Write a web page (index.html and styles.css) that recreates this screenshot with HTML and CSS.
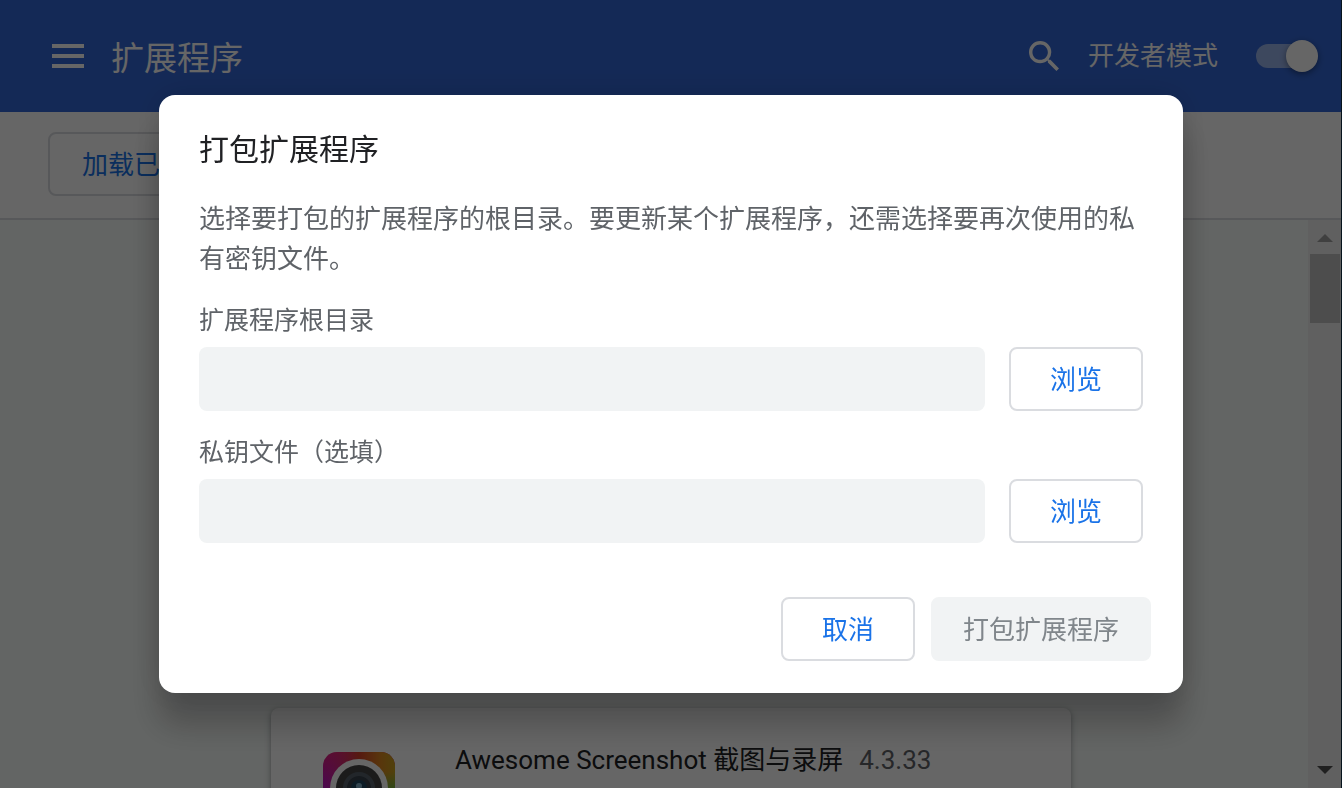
FILE: index.html
```html
<!DOCTYPE html>
<html lang="zh-CN">
<head>
<meta charset="utf-8">
<title>扩展程序</title>
<link rel="stylesheet" href="styles.css">
</head>
<body>
<div class="page">
  <header class="topbar">
    <button class="icon-button" type="button" aria-label="主菜单">
      <svg width="32" height="24" viewBox="0 0 32 24"><path fill="currentColor" d="M0 0h32v4H0zM0 10h32v4H0zM0 20h32v4H0z"/></svg>
    </button>
    <h1 class="topbar-title">扩展程序</h1>
    <button class="icon-button" type="button" aria-label="搜索">
      <svg width="30" height="30" viewBox="3 3 17.5 17.5"><path fill="currentColor" d="M15.5 14h-.79l-.28-.27A6.47 6.47 0 0 0 16 9.500 6.500 6.500 0 1 0 9.500 16c1.610 0 3.090-.59 4.230-1.570l.27.28v.79l5 4.990L20.490 19l-4.990-5zm-6 0C7.010 14 5 11.990 5 9.500S7.010 5 9.500 5 14 7.010 14 9.500 11.990 14 9.500 14z"/></svg>
    </button>
    <label class="dev-mode">开发者模式<input class="toggle" type="checkbox" role="switch" checked></label>
  </header>
  <div class="toolbar">
    <button class="button button-load" type="button">加载已</button>
  </div>
  <div class="content">
    <main class="items">
      <article class="card">
        <svg class="card-icon" viewBox="0 0 72 72" aria-hidden="true">
          <defs>
            <linearGradient id="left" x1="0" y1="1" x2="0" y2="0"><stop offset="0" stop-color="#a020f0"/><stop offset=".6" stop-color="#c018b8"/><stop offset="1" stop-color="#e0207c"/></linearGradient>
            <linearGradient id="across" x1="0" y1="0" x2="1" y2="0"><stop offset="0" stop-color="#d82890" stop-opacity="0"/><stop offset=".5" stop-color="#d84028"/><stop offset=".8" stop-color="#dc8820"/><stop offset="1" stop-color="#c8a420"/></linearGradient>
            <linearGradient id="down" x1="0" y1="0" x2="0" y2="1"><stop offset=".1" stop-color="#58b848" stop-opacity="0"/><stop offset=".5" stop-color="#58b848"/></linearGradient>
          </defs>
          <rect width="72" height="72" rx="14" fill="url(#left)"/>
          <rect width="72" height="72" rx="14" fill="url(#across)"/>
          <path d="M50 14h22v44a14 14 0 0 1-8 14H50z" fill="url(#down)"/>
          <circle cx="36" cy="36" r="29" fill="#fff"/>
          <circle cx="36" cy="36" r="23" fill="#454545"/>
          <circle cx="36" cy="36" r="16" fill="#56606a"/>
          <circle cx="36" cy="36" r="12" fill="#38424c"/>
          <circle cx="36" cy="36" r="8" fill="#204860"/>
          <circle cx="36" cy="34" r="3" fill="#80b0c8"/>
        </svg>
        <h2 class="card-name">Awesome Screenshot 截图与录屏</h2>
        <span class="card-version">4.3.33</span>
      </article>
    </main>
    <div class="scrollbar" aria-hidden="true">
      <svg class="arrow-up" width="16" height="8" viewBox="0 0 16 8"><path fill="currentColor" d="M8 0l8 8H0z"/></svg>
      <div class="thumb"></div>
      <svg class="arrow-down" width="16" height="8" viewBox="0 0 16 8"><path fill="currentColor" d="M0 0h16L8 8z"/></svg>
    </div>
  </div>
</div>
<div class="backdrop">
  <dialog class="dialog" open aria-labelledby="dialog-title">
    <h2 class="dialog-title" id="dialog-title">打包扩展程序</h2>
    <p class="dialog-text">选择要打包的扩展程序的根目录。要更新某个扩展程序，还需选择要再次使用的私有密钥文件。</p>
    <form class="form">
      <label class="field-label" for="root-dir">扩展程序根目录</label>
      <div class="field">
        <input class="text-input" id="root-dir" type="text">
        <button class="button" type="button">浏览</button>
      </div>
      <label class="field-label" for="key-file">私钥文件（选填）</label>
      <div class="field">
        <input class="text-input" id="key-file" type="text">
        <button class="button" type="button">浏览</button>
      </div>
      <div class="actions">
        <button class="button" type="button">取消</button>
        <button class="button button-disabled" type="submit" disabled>打包扩展程序</button>
      </div>
    </form>
  </dialog>
</div>
</body>
</html>
```
FILE: styles.css
```css
* {
  box-sizing: border-box;
}

body {
  margin: 0;
  background: #12324a;
  font-family: Roboto, "Noto Sans CJK SC", sans-serif;
  font-size: 26px;
  line-height: 40px;
  color: #202124;
}

h1, h2, p {
  margin: 0;
  font-weight: 400;
}

button, input {
  font: inherit;
}

.page {
  display: flex;
  flex-direction: column;
  height: 100vh;
  margin-right: 1px;
  overflow: hidden;
  background: #fff;
}

.topbar {
  display: flex;
  flex: none;
  align-items: center;
  height: 112px;
  padding: 0 23px 0 52px;
  background: #3367d6;
  color: #fff;
}

.icon-button {
  display: flex;
  padding: 0;
  border: 0;
  background: none;
  color: inherit;
}

.topbar-title {
  flex: 1;
  padding-top: 6px;
  margin-left: 27px;
  font-size: 33px;
}

.dev-mode {
  display: flex;
  align-items: center;
  gap: 38px;
  margin-left: 29px;
}

.toggle {
  position: relative;
  width: 62px;
  height: 24px;
  margin: 0;
  appearance: none;
}

.toggle::before {
  content: "";
  display: block;
  width: 56px;
  height: 24px;
  border-radius: 12px;
  background: #fff;
  opacity: 0.5;
}

.toggle::after {
  content: "";
  position: absolute;
  top: -4px;
  right: 0;
  width: 32px;
  height: 32px;
  border-radius: 50%;
  background: #fff;
  box-shadow: 0 2px 6px rgba(0, 0, 0, 0.4);
}

.toolbar {
  flex: none;
  padding: 20px 48px 22px;
  border-bottom: 2px solid #dadce0;
}

.button {
  flex: none;
  height: 64px;
  min-width: 134px;
  padding: 2px 32px 0;
  border: 2px solid #dadce0;
  border-radius: 8px;
  background: none;
  color: #1a73e8;
  white-space: nowrap;
}

.button-load {
  min-width: 324px;
  text-align: left;
}

.button-disabled {
  border-color: #f1f3f4;
  background: #f1f3f4;
  color: #80868b;
  padding: 2px 30px 0;
}

.content {
  display: flex;
  flex: 1;
  min-height: 0;
  background: #f8fcfa;
}

.items {
  flex: 1;
  padding: 488px 0 0 34px;
}

.card {
  display: flex;
  align-items: flex-start;
  max-width: 800px;
  height: 320px;
  margin: 0 auto;
  padding: 32px 52px;
  border-radius: 8px;
  background: #fff;
  box-shadow: 0 2px 4px rgba(60, 64, 67, 0.3), 0 2px 6px 2px rgba(60, 64, 67, 0.15);
}

.card-icon {
  width: 72px;
  height: 72px;
  margin-top: 12px;
}

.card-name {
  margin-left: 60px;
  font-size: 26px;
}

.card-version {
  margin-left: 16px;
  color: #5f6368;
}

.scrollbar {
  display: flex;
  flex-direction: column;
  width: 33px;
  padding: 14px 1px 14px 2px;
  background: #f1f1f1;
}

.thumb {
  height: 69px;
  margin-top: 12px;
  background: #c1c1c1;
}

.arrow-up {
  align-self: center;
  color: #a0a0a0;
}

.arrow-down {
  align-self: center;
  margin-top: auto;
  color: #505050;
}

.backdrop {
  position: fixed;
  inset: 0;
  display: flex;
  align-items: center;
  justify-content: center;
  background: rgba(0, 0, 0, 0.6);
}

.dialog {
  position: static;
  width: 100%;
  max-width: 1024px;
  margin: 0;
  padding: 35px 40px 32px;
  border: 0;
  border-radius: 16px;
  background: #fff;
  box-shadow: 0 0 32px rgba(0, 0, 0, 0.12), 0 32px 32px rgba(0, 0, 0, 0.24);
  color: #202124;
}

.dialog-title {
  font-size: 30px;
}

.dialog-text {
  margin-top: 29px;
  color: #5f6368;
}

.field-label {
  display: block;
  margin-top: 24px;
  margin-bottom: 8px;
  font-size: 25px;
  line-height: 36px;
  color: #5f6368;
}

.field {
  display: flex;
  gap: 24px;
}

.text-input {
  flex: 1;
  min-width: 0;
  height: 64px;
  padding: 0 16px;
  border: 0;
  border-radius: 8px;
  background: #f1f3f4;
}

.actions {
  display: flex;
  justify-content: flex-end;
  gap: 16px;
  margin-top: 54px;
  margin-right: -8px;
}
```
